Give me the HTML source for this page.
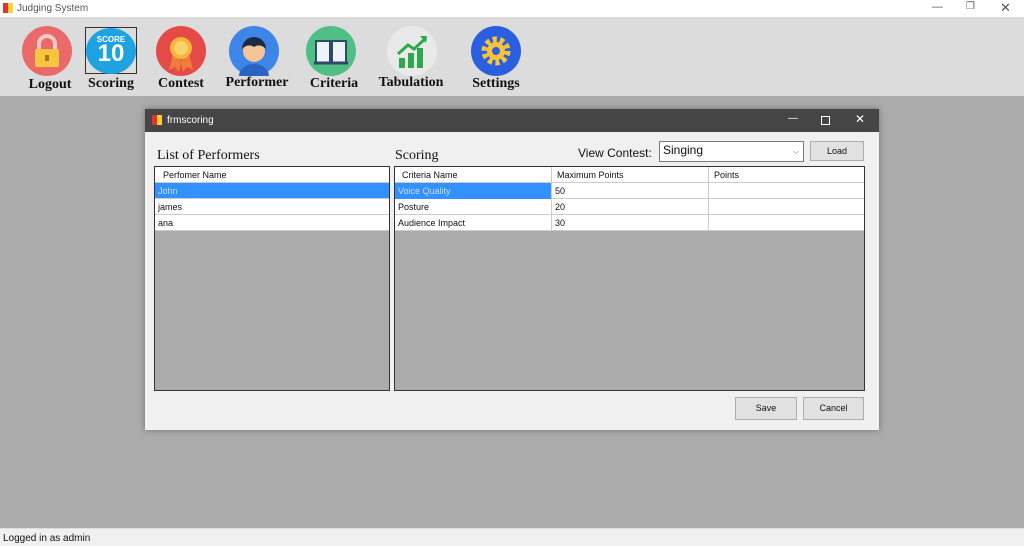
<!DOCTYPE html>
<html><head><meta charset="utf-8"><style>
*{margin:0;padding:0;box-sizing:border-box}
body{width:1024px;height:546px;position:relative;overflow:hidden;background:#ababab;font-family:"Liberation Sans",sans-serif;font-size:9px;color:#111}
.abs{position:absolute}
#title{left:0;top:0;width:1024px;height:17px;background:#fff;font-size:10px;color:#555}
#tool{left:0;top:17px;width:1024px;height:79px;background:#dcdcdc}
.lbl{position:absolute;top:59px;font-family:"Liberation Serif",serif;font-weight:bold;font-size:14px;color:#111;transform:translateX(-50%);white-space:nowrap}
.ic{position:absolute;top:9px;width:50px;height:50px;border-radius:50%}
#status{left:0;top:528px;width:1024px;height:18px;background:#f0f0f0;border-top:1px solid #ddd;font-size:10px;padding:4px 3px}
#dlg{left:145px;top:109px;width:734px;height:321px;background:#f0f0f0;box-shadow:0 0 6px rgba(0,0,0,.35)}
#dt{left:0;top:0;width:734px;height:23px;background:#454545;color:#fff;font-size:10px}
.grid{position:absolute;background:#ababab;border:1px solid #333}
.row{position:absolute;left:0;height:16px;background:#fff;border-bottom:1px solid #ccc;font-size:9px;line-height:16px;padding-left:3px}
.sel{background:#3390ff;color:#cde}
.cell{position:absolute;top:0;height:16px;border-right:1px solid #ccc;padding-left:3px;line-height:16px}
.btn{position:absolute;background:#e1e1e1;border:1px solid #adadad;font-size:9px;text-align:center}
h3{position:absolute;font-family:"Liberation Serif",serif;font-weight:normal;font-size:14px}
</style></head><body>
<div id="title" class="abs"><div class="abs" style="left:3px;top:3px;width:10px;height:10px;background:linear-gradient(90deg,#d33 50%,#fc3 50%)"></div><span class="abs" style="left:17px;top:3px">Judging System</span>
<span class="abs" style="left:932px;top:1px;font-size:11px">—</span><span class="abs" style="left:966px;top:1px;font-size:10px">❐</span><span class="abs" style="left:1000px;top:0px;font-size:13px">✕</span></div>
<div id="tool" class="abs">
 <div class="ic" style="left:22px;background:#ea6a6a"><svg width="50" height="50"><path d="M17 24v-6a8 8 0 0 1 16 0v6" stroke="#f6c9c9" stroke-width="4" fill="none"/><rect x="13" y="23" width="24" height="18" rx="2" fill="#f8c43c"/><rect x="23" y="29" width="4" height="6" fill="#a57a10"/></svg></div>
 <div class="abs" style="left:85px;top:10px;width:52px;height:47px;border:1px solid #333"></div>
 <div class="ic" style="left:86px;background:#1ea3e0;width:50px;height:46px;top:11px"><div class="abs" style="left:0;width:50px;top:7px;text-align:center;color:#fff;font-size:8px;font-weight:bold">SCORE</div><div class="abs" style="left:0;width:50px;top:14px;text-align:center;color:#fff;font-size:24px;font-weight:bold;line-height:24px">10</div></div>
 <div class="ic" style="left:156px;background:#e44b47"><svg width="50" height="50"><path d="M17 28l-4 16 6-3 4 5 3-14zM33 28l4 16-6-3-4 5-3-14z" fill="#f07d3a"/><circle cx="25" cy="22" r="11" fill="#f6b63a"/><circle cx="25" cy="22" r="7" fill="#f9d36a"/></svg></div>
 <div class="ic" style="left:229px;background:#3d86e8"><svg width="50" height="50"><path d="M10 50a15 12 0 0 1 30 0z" fill="#2a63c4"/><circle cx="25" cy="25" r="11" fill="#f7c49a"/><path d="M13 23a12 12 0 0 1 24 0q-6-6-12-2q-6-4-12 2z" fill="#1b2b44"/></svg></div>
 <div class="ic" style="left:306px;background:#4fbf85"><svg width="50" height="50"><path d="M10 15h14v22H10zM26 15h14v22H26z" fill="#eef3f8" stroke="#2f4a66" stroke-width="2"/><path d="M8 37h34" stroke="#2f4a66" stroke-width="3"/></svg></div>
 <div class="ic" style="left:387px;background:#e9e9e9"><svg width="50" height="50"><rect x="12" y="32" width="6" height="10" fill="#2da84a"/><rect x="21" y="27" width="6" height="15" fill="#2da84a"/><rect x="30" y="22" width="6" height="20" fill="#2da84a"/><path d="M11 28l10-9 6 4 12-11" stroke="#2da84a" stroke-width="3" fill="none"/><path d="M33 10l7 0-1 7z" fill="#2da84a"/></svg></div>
 <div class="ic" style="left:471px;background:#2a5fe0"><svg width="50" height="50"><circle cx="25" cy="25" r="11" fill="none" stroke="#f6c33a" stroke-width="7" stroke-dasharray="4 2.9"/><circle cx="25" cy="25" r="9" fill="#f6c33a"/><circle cx="25" cy="25" r="4" fill="#2a5fe0"/></svg></div>
 <span class="lbl" style="left:50px;top:60px">Logout</span><span class="lbl" style="left:111px">Scoring</span><span class="lbl" style="left:181px">Contest</span><span class="lbl" style="left:257px;top:58px">Performer</span><span class="lbl" style="left:334px">Criteria</span><span class="lbl" style="left:411px;top:58px">Tabulation</span><span class="lbl" style="left:496px">Settings</span>
</div>
<div id="dlg" class="abs">
 <div id="dt" class="abs"><div class="abs" style="left:7px;top:6px;width:10px;height:10px;background:linear-gradient(90deg,#d33 50%,#fc3 50%)"></div><span class="abs" style="left:22px;top:6px">frmscoring</span><span class="abs" style="left:643px;top:4px">—</span><span class="abs" style="left:676px;top:4px;width:9px;height:9px;border:1px solid #fff;top:7px"></span><span class="abs" style="left:710px;top:3px;font-size:12px">✕</span></div>
 <h3 style="left:12px;top:39px">List of Performers</h3><h3 style="left:250px;top:39px">Scoring</h3>
 <span class="abs" style="left:433px;top:37px;font-size:12px">View Contest:</span>
 <div class="abs" style="left:514px;top:32px;width:145px;height:21px;background:#fff;border:1px solid #7a7a7a;font-size:12px;padding:1px 3px">Singing<span class="abs" style="right:4px;top:5px;font-size:8px;color:#666">⌵</span></div>
 <div class="btn" style="left:665px;top:32px;width:54px;height:20px;line-height:18px">Load</div>
 <div class="grid" style="left:9px;top:57px;width:236px;height:225px">
  <div class="row" style="top:0;width:234px;padding-left:8px">Perfomer Name</div>
  <div class="row sel" style="top:16px;width:234px">John</div>
  <div class="row" style="top:32px;width:234px">james</div>
  <div class="row" style="top:48px;width:234px">ana</div>
 </div>
 <div class="grid" style="left:249px;top:57px;width:471px;height:225px">
  <div class="row" style="top:0;width:469px;padding:0"><div class="cell" style="left:0;width:157px;padding-left:7px">Criteria Name</div><div class="cell" style="left:157px;width:157px;padding-left:5px">Maximum Points</div><div class="cell" style="left:314px;width:155px;padding-left:5px;border:0">Points</div></div>
  <div class="row" style="top:16px;width:469px;padding:0"><div class="cell sel" style="left:0;width:157px">Voice Quality</div><div class="cell" style="left:157px;width:157px">50</div></div>
  <div class="row" style="top:32px;width:469px;padding:0"><div class="cell" style="left:0;width:157px">Posture</div><div class="cell" style="left:157px;width:157px">20</div></div>
  <div class="row" style="top:48px;width:469px;padding:0"><div class="cell" style="left:0;width:157px">Audience Impact</div><div class="cell" style="left:157px;width:157px">30</div></div>
 </div>
 <div class="btn" style="left:590px;top:288px;width:62px;height:23px;line-height:21px">Save</div>
 <div class="btn" style="left:658px;top:288px;width:61px;height:23px;line-height:21px">Cancel</div>
</div>
<div id="status" class="abs">Logged in as admin</div>
</body></html>
